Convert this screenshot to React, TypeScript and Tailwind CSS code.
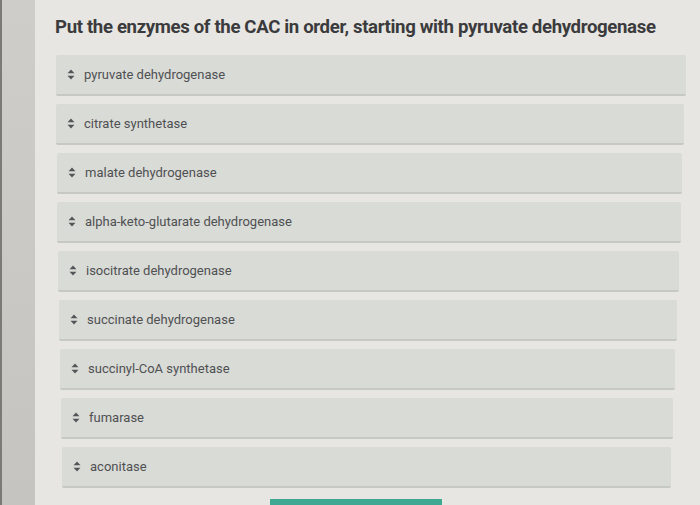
import React from "react";

const items = [
  { label: "pyruvate dehydrogenase", cls: "ml-[21px] mr-[14px]" },
  { label: "citrate synthetase", cls: "ml-[21px] mr-[16px]" },
  { label: "malate dehydrogenase", cls: "ml-[22px] mr-[18px]" },
  { label: "alpha-keto-glutarate dehydrogenase", cls: "ml-[22px] mr-[19px]" },
  { label: "isocitrate dehydrogenase", cls: "ml-[23px] mr-[21px]" },
  { label: "succinate dehydrogenase", cls: "ml-[24px] mr-[23px]" },
  { label: "succinyl-CoA synthetase", cls: "ml-[25px] mr-[25px]" },
  { label: "fumarase", cls: "ml-[26px] mr-[27px]" },
  { label: "aconitase", cls: "ml-[27px] mr-[29px]" },
];

const SortIcon = () => (
  <svg width="8" height="11" viewBox="0 0 8 11" className="shrink-0">
    <path d="M4 0.5 L7.5 4.2 L0.5 4.2 Z" fill="#535558" />
    <path d="M4 10.5 L7.5 6.8 L0.5 6.8 Z" fill="#535558" />
  </svg>
);

export default function App() {
  return (
    <div className="flex w-[700px] h-[505px] overflow-hidden bg-[#e7e6e2] font-['Roboto',sans-serif]">
      <div className="w-[35px] shrink-0 border-l-2 border-[#7c7a77] bg-gradient-to-b from-[#cfcdc9] to-[#c6c4c0]" />
      <div className="relative flex-1 flex flex-col">
        <h1 className="ml-[20px] mt-[15px] h-[25px] text-[18.6px] leading-[25px] font-bold tracking-[-0.35px] text-[#3b3b3d] whitespace-nowrap">
          Put the enzymes of the CAC in order, starting with pyruvate dehydrogenase
        </h1>
        <div className="mt-[15px] flex flex-col gap-[8px]">
          {items.map((item) => (
            <div
              key={item.label}
              className={`${item.cls} h-[41px] flex items-center gap-[9px] pl-[11px] bg-[#d9dbd7] border-b-2 border-[#c6c8c3] rounded-[2px]`}
            >
              <SortIcon />
              <span className="text-[13px] text-[#4f5052]">{item.label}</span>
            </div>
          ))}
        </div>
        <div className="absolute left-[235px] bottom-0 w-[172px] h-[6px] bg-[#3ea893]" />
      </div>
    </div>
  );
}
